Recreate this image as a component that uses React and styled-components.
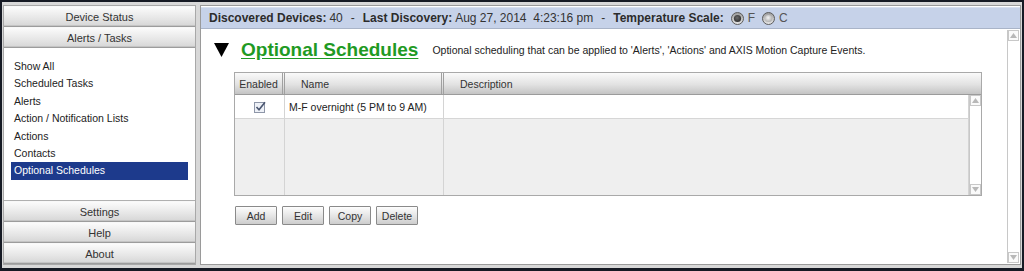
import React from 'react';
import styled, { createGlobalStyle } from 'styled-components';

const GlobalStyle = createGlobalStyle`
  html, body { margin: 0; padding: 0; background: #161a24; }
  body { font-family: "Liberation Sans", Arial, sans-serif; }
  * { box-sizing: border-box; }
`;

const navTop = ['Device Status', 'Alerts / Tasks'];
const navBottom = ['Settings', 'Help', 'About'];
const tasks = [
  'Show All',
  'Scheduled Tasks',
  'Alerts',
  'Action / Notification Lists',
  'Actions',
  'Contacts',
  'Optional Schedules',
];

const schedules = [{ enabled: true, name: 'M-F overnight (5 PM to 9 AM)', description: '' }];

const Checkbox = ({ checked }) => (
  <svg width="12" height="12" viewBox="0 0 12 12">
    <rect x="0.5" y="1.5" width="10" height="10" fill="#eef1f7" stroke="#8e96a8" />
    {checked && <path d="M2.5 6 L5 8.8 L11 1.2" fill="none" stroke="#4a5670" strokeWidth="1.6" />}
  </svg>
);

const Radio = ({ checked }) => (
  <svg width="13" height="13" viewBox="0 0 13 13">
    <defs>
      <linearGradient id="ringGrad" x1="0" y1="0" x2="0" y2="1">
        <stop offset="0" stopColor="#9a9a9a" />
        <stop offset="1" stopColor="#e8e8e8" />
      </linearGradient>
      <radialGradient id={checked ? 'dotOn' : 'dotOff'} cx="45%" cy="40%" r="65%">
        <stop offset="0" stopColor={checked ? '#6a6a6a' : '#f4f4f4'} />
        <stop offset="1" stopColor={checked ? '#2a2a2a' : '#a8a8a8'} />
      </radialGradient>
    </defs>
    <circle cx="6.5" cy="6.5" r="6" fill="url(#ringGrad)" stroke="#5c5c5c" strokeWidth="1" />
    <circle cx="6.5" cy="6.5" r="3.6" fill={`url(#${checked ? 'dotOn' : 'dotOff'})`} />
  </svg>
);

const Arrow = ({ up }) => (
  <svg width="7" height="5" viewBox="0 0 7 5">
    <path d={up ? 'M0 5 L3.5 0 L7 5 Z' : 'M0 0 L3.5 5 L7 0 Z'} fill="#b8b8b8" />
  </svg>
);

const ScrollBar = () => (
  <StyledScroll>
    <StyledScrollBtn><Arrow up /></StyledScrollBtn>
    <StyledScrollTrack />
    <StyledScrollBtn><Arrow /></StyledScrollBtn>
  </StyledScroll>
);

const App = () => (
  <>
    <GlobalStyle />
    <StyledFrame>
      <StyledInner>
        <StyledNav>
          {navTop.map(n => <StyledNavButton key={n}>{n}</StyledNavButton>)}
          <StyledTaskList>
            {tasks.map(t => (
              <StyledTask key={t} selected={t === 'Optional Schedules'}>{t}</StyledTask>
            ))}
          </StyledTaskList>
          {navBottom.map(n => <StyledNavButton key={n}>{n}</StyledNavButton>)}
        </StyledNav>

        <StyledMain>
          <StyledStatusBar>
            <b>Discovered Devices:</b>
            <span>40</span>
            <StyledDash>-</StyledDash>
            <b>Last Discovery:</b>
            <span>Aug 27, 2014&nbsp; 4:23:16 pm</span>
            <StyledDash>-</StyledDash>
            <b>Temperature Scale:</b>
            <StyledRadio><Radio checked /> F</StyledRadio>
            <StyledRadio><Radio /> C</StyledRadio>
          </StyledStatusBar>

          <StyledBody>
            <StyledContent>
              <StyledTitleRow>
                <svg width="15" height="14" viewBox="0 0 15 14">
                  <path d="M0 0 L15 0 L7.5 14 Z" fill="#000" />
                </svg>
                <StyledTitle>Optional Schedules</StyledTitle>
                <StyledSubtitle>
                  Optional scheduling that can be applied to 'Alerts', 'Actions' and AXIS Motion Capture Events.
                </StyledSubtitle>
              </StyledTitleRow>

              <StyledTable>
                <StyledHeadRow>
                  <StyledHeadCell center>Enabled</StyledHeadCell>
                  <StyledHeadCell>Name</StyledHeadCell>
                  <StyledHeadCell last>Description</StyledHeadCell>
                </StyledHeadRow>
                <StyledTableBody>
                  <StyledRows>
                    {schedules.map((s, i) => (
                      <StyledRow key={i}>
                        <StyledCell center><Checkbox checked={s.enabled} /></StyledCell>
                        <StyledCell>{s.name}</StyledCell>
                        <StyledCell>{s.description}</StyledCell>
                      </StyledRow>
                    ))}
                    <StyledFiller>
                      <StyledCell />
                      <StyledCell />
                      <StyledCell />
                    </StyledFiller>
                  </StyledRows>
                  <ScrollBar />
                </StyledTableBody>
              </StyledTable>

              <StyledActions>
                {['Add', 'Edit', 'Copy', 'Delete'].map(b => <StyledButton key={b}>{b}</StyledButton>)}
              </StyledActions>
            </StyledContent>
            <ScrollBar />
          </StyledBody>
        </StyledMain>
      </StyledInner>
    </StyledFrame>
  </>
);

const StyledFrame = styled.div`
  width: 1024px;
  height: 271px;
  padding: 2px 2px 3px 2px;
  background: #161a24;
`;

const StyledInner = styled.div`
  display: flex;
  gap: 4px;
  height: 100%;
  padding: 3px 1px 3px 1px;
  background: #d8d8d8;
`;

const StyledNav = styled.div`
  width: 193px;
  display: flex;
  flex-direction: column;
  background: #fff;
  border: 1px solid #a8a8a8;
`;

const StyledNavButton = styled.div`
  height: 21px;
  display: flex;
  align-items: center;
  justify-content: center;
  font-size: 11px;
  color: #333;
  background: linear-gradient(#fbfbfb, #e6e6e6 60%, #d6d6d6);
  border-top: 1px solid #f8f8f8;
  border-bottom: 1px solid #9c9c9c;
  box-shadow: inset 0 -1px 0 #c4c4c4;
`;

const StyledTaskList = styled.div`
  flex: 1;
  padding: 10px 7px 0 7px;
  border-bottom: 1px solid #b0b0b0;
`;

const StyledTask = styled.div`
  height: 17.4px;
  line-height: 17.4px;
  padding-left: 3px;
  font-size: 10.5px;
  color: ${p => (p.selected ? '#fff' : '#222')};
  background: ${p => (p.selected ? '#1d3a8c' : 'transparent')};
`;

const StyledMain = styled.div`
  flex: 1;
  display: flex;
  flex-direction: column;
  background: #fff;
  border: 1px solid #9a9a9a;
  padding-top: 1px;
`;

const StyledStatusBar = styled.div`
  height: 22px;
  display: flex;
  align-items: center;
  gap: 3px;
  padding-left: 8px;
  font-size: 12px;
  color: #333;
  background: #c6d2e9;
  border-top: 1px solid #d8e0ef;
  border-bottom: 1px solid #a9b4c8;
  b { font-weight: bold; color: #2c2c2c; }
`;

const StyledDash = styled.span`
  margin: 0 5px;
`;

const StyledRadio = styled.span`
  display: inline-flex;
  align-items: center;
  gap: 4px;
  margin-left: 4px;
  color: #555;
`;

const StyledBody = styled.div`
  flex: 1;
  display: flex;
  padding: 1px 1px 1px 0;
`;

const StyledContent = styled.div`
  flex: 1;
  padding: 9px 25px 0 13px;
`;

const StyledTitleRow = styled.div`
  display: flex;
  align-items: center;
  height: 22px;
`;

const StyledTitle = styled.span`
  margin-left: 12px;
  font-size: 19px;
  font-weight: bold;
  color: #1f9a24;
  text-decoration: underline;
  text-underline-offset: 2px;
`;

const StyledSubtitle = styled.span`
  margin-left: 14px;
  font-size: 10.5px;
  color: #222;
`;

const StyledTable = styled.div`
  margin: 11px 0 0 20px;
  border: 1px solid #a9a9a9;
  background: #efefef;
`;

const columns = '50px 159px 1fr';

const StyledHeadRow = styled.div`
  display: grid;
  grid-template-columns: ${columns};
  height: 22px;
  background: linear-gradient(#fafafa, #e2e2e2 55%, #c4c4c4);
  border-bottom: 1px solid #9b9b9b;
`;

const StyledHeadCell = styled.div`
  display: flex;
  align-items: center;
  justify-content: ${p => (p.center ? 'center' : 'flex-start')};
  padding-left: ${p => (p.center ? '0' : '16px')};
  font-size: 10.5px;
  color: #333;
  border-right: ${p => (p.last ? 'none' : '3px double #a0a0a0')};
`;

const StyledTableBody = styled.div`
  display: flex;
  height: 100px;
`;

const StyledRows = styled.div`
  flex: 1;
  display: flex;
  flex-direction: column;
`;

const StyledRow = styled.div`
  display: grid;
  grid-template-columns: ${columns};
  height: 24px;
  background: #fff;
  border-bottom: 1px solid #d6d6d6;
`;

const StyledFiller = styled.div`
  flex: 1;
  display: grid;
  grid-template-columns: ${columns};
  background: #efefef;
`;

const StyledCell = styled.div`
  display: flex;
  align-items: center;
  justify-content: ${p => (p.center ? 'center' : 'flex-start')};
  padding-left: ${p => (p.center ? '0' : '4px')};
  font-size: 10.5px;
  color: #222;
  border-right: 1px solid #d4d4d4;
`;

const StyledScroll = styled.div`
  width: 12px;
  display: flex;
  flex-direction: column;
  background: #fff;
  border-left: 1px solid #c8c8c8;
`;

const StyledScrollBtn = styled.div`
  height: 11px;
  display: flex;
  align-items: center;
  justify-content: center;
  border: 1px solid #c8c8c8;
  background: #fafafa;
`;

const StyledScrollTrack = styled.div`
  flex: 1;
`;

const StyledActions = styled.div`
  display: flex;
  gap: 5px;
  margin: 10px 0 0 21px;
`;

const StyledButton = styled.button`
  width: 42px;
  height: 19px;
  padding: 0;
  font-family: "Liberation Sans", Arial, sans-serif;
  font-size: 10.5px;
  color: #333;
  background: linear-gradient(#fdfdfd, #e4e4e4 55%, #cdcdcd);
  border: 1px solid #8a8a8a;
  border-radius: 1px;
`;

export default App;
